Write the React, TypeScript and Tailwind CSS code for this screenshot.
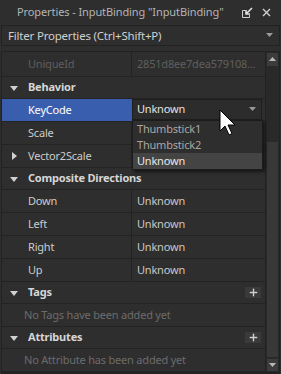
import { Plus } from "lucide-react";

const font = { fontFamily: '"Noto Sans", "Open Sans", sans-serif' };

const Caret = ({ open = true }: { open?: boolean }) => (
  <svg width="8" height="8" viewBox="0 0 8 8" className="shrink-0">
    {open ? <path d="M0 2 L8 2 L4 7 Z" fill="#d0d0d0" /> : <path d="M2 0 L7 4 L2 8 Z" fill="#d0d0d0" />}
  </svg>
);

const Header = ({ title, plus }: { title: string; plus?: boolean }) => (
  <div className="flex items-center h-[22px] border-b border-[#232323] pl-[8px] pr-[4px]">
    <Caret />
    <span className="ml-[10px] font-bold text-[11px] tracking-[-0.2px] text-[#d6d6d6]">{title}</span>
    {plus && (
      <div className="ml-auto w-[16px] h-[11px] bg-[#3a3a3a] flex items-center justify-center">
        <Plus size={11} strokeWidth={3} color="#cfcfcf" />
      </div>
    )}
  </div>
);

const Row = ({ name, value, caret }: { name: string; value?: string; caret?: boolean }) => (
  <div className="flex h-[23px] border-b border-[#232323] text-[11px] tracking-[-0.2px]">
    <div className="w-[130px] shrink-0 flex items-center border-r border-[#232323] pl-[8px] text-[#cccccc]">
      <span className="w-[18px]">{caret && <Caret open={false} />}</span>
      {name}
    </div>
    <div className="flex items-center pl-[5px] text-[#c8c8c8]">{value}</div>
  </div>
);

const Empty = ({ text }: { text: string }) => (
  <div className="flex items-center h-[23px] border-b border-[#232323] pl-[22px] text-[11px] tracking-[-0.2px] text-[#6c6c6c]">{text}</div>
);

export default function App() {
  return (
    <div className="w-[281px] h-[374px] bg-[#2e2e2e] flex flex-col overflow-hidden relative" style={font}>
      {/* title */}
      <div className="h-[25px] flex items-center pl-[17px] pr-[10px] text-[11px] tracking-[-0.1px] text-[#b4b4b4]">
        <span className="whitespace-nowrap">Properties - InputBinding "InputBinding"</span>
        <svg width="11" height="11" viewBox="0 0 11 11" className="ml-auto">
          <path d="M0.5 3.5 V10.5 H7.5 V8" stroke="#cfcfcf" fill="none" />
          <path d="M0.5 3.5 H3" stroke="#cfcfcf" />
          <path d="M10 1 L4.5 6.5 M4 3 V7 H8" stroke="#e0e0e0" strokeWidth="1.6" fill="none" />
        </svg>
        <svg width="9" height="9" viewBox="0 0 9 9" className="ml-[9px]">
          <path d="M1 1 L8 8 M8 1 L1 8" stroke="#cfcfcf" strokeWidth="1.4" />
        </svg>
      </div>

      {/* filter */}
      <div className="mx-[1px] h-[21px] border border-[#222] flex items-center pl-[6px] pr-[6px] text-[11.5px] tracking-[-0.2px] text-[#d0d0d0]">
        <span>Filter Properties (Ctrl+Shift+P)</span>
        <svg width="7" height="5" viewBox="0 0 7 5" className="ml-auto">
          <path d="M0 0 H7 L3.5 4 Z" fill="#9a9a9a" />
        </svg>
      </div>

      {/* panel */}
      <div className="mt-[5px] mx-[1px] flex flex-1 min-h-0 border border-[#222] border-b-2">
        <div className="flex-1 flex flex-col border-r border-[#222] relative">
          <div className="flex h-[25px] border-b border-[#232323] text-[11px] tracking-[-0.2px] text-[#5f5f5f]">
            <div className="w-[130px] shrink-0 flex items-center border-r border-[#232323] pl-[26px]">UniqueId</div>
            <div className="flex items-center pl-[5px]">2851d8ee7dea579108...</div>
          </div>
          <Header title="Behavior" />
          <div className="flex h-[23px] border-b border-[#232323] text-[11px] tracking-[-0.2px]">
            <div className="w-[130px] shrink-0 flex items-center pl-[26px] bg-[#3a5eae] text-white">KeyCode</div>
            <div className="flex-1 relative">
              <div className="absolute left-0 top-0 w-[130px] h-[21px] border border-[#1e1e1e] bg-[#2c2c2c] flex items-center pl-[4px] pr-[5px] text-[#e2e2e2]">
                Unknown
                <svg width="7" height="5" viewBox="0 0 7 5" className="ml-auto">
                  <path d="M0 0 H7 L3.5 4 Z" fill="#9a9a9a" />
                </svg>
              </div>
              <div className="absolute left-0 top-[21px] w-[131px] h-[50px] z-10 bg-[#2e2e2e] border border-[#1c1c1c] shadow-[2px_2px_3px_rgba(0,0,0,0.55)] flex flex-col">
                <div className="h-[16px] flex items-center pl-[4px] text-[#a7a7a7]">Thumbstick1</div>
                <div className="h-[16px] flex items-center pl-[4px] text-[#a7a7a7]">Thumbstick2</div>
                <div className="h-[16px] flex items-center pl-[4px] bg-[#444444] text-[#e8e8e8]">Unknown</div>
              </div>
            </div>
          </div>
          <Row name="Scale" />
          <Row name="Vector2Scale" caret />
          <Header title="Composite Directions" />
          <Row name="Down" value="Unknown" />
          <Row name="Left" value="Unknown" />
          <Row name="Right" value="Unknown" />
          <Row name="Up" value="Unknown" />
          <Header title="Tags" plus />
          <Empty text="No Tags have been added yet" />
          <Header title="Attributes" plus />
          <Empty text="No Attribute has been added yet" />
        </div>

        {/* scrollbar */}
        <div className="w-[13px] flex flex-col bg-[#292929] p-[1px]">
          <div className="h-[13px] bg-[#3c3c3c] flex items-center justify-center">
            <svg width="7" height="5" viewBox="0 0 7 5"><path d="M0 4 H7 L3.5 0 Z" fill="#b8b8b8" /></svg>
          </div>
          <div className="h-[76px]" />
          <div className="flex-1 bg-[#383838]" />
          <div className="h-[12px] mt-[2px] bg-[#3c3c3c] flex items-center justify-center">
            <svg width="7" height="5" viewBox="0 0 7 5"><path d="M0 0 H7 L3.5 4 Z" fill="#b8b8b8" /></svg>
          </div>
        </div>
      </div>

      {/* cursor */}
      <svg width="18" height="28" viewBox="0 0 18 28" className="absolute left-[219px] top-[109px] z-20">
        <path d="M1 1 V22 L6 17 L10 26 L13 24.5 L9 16 H16 Z" fill="#ffffff" stroke="#000" strokeWidth="1" />
      </svg>
    </div>
  );
}
